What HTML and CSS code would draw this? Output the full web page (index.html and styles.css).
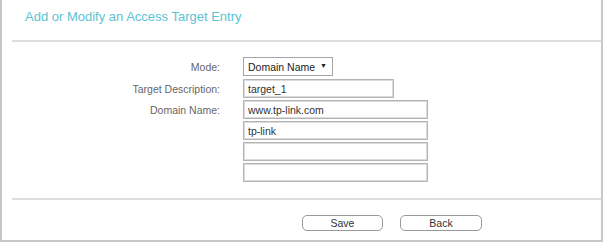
FILE: index.html
```html
<!DOCTYPE html>
<html>
<head>
    <title>Access Target</title>
    <link rel="stylesheet" href="styles.css">
</head>
<body>
<div class="panel">
    <div class="panel-title">Add or Modify an Access Target Entry</div>
    <div class="divider"></div>

    <div class="form">
        <div class="row row-mode">
            <label class="label">Mode:</label>
            <span class="select-wrap">
                <select class="select">
                    <option>Domain Name</option>
                    <option>IP Address</option>
                </select>
            </span>
        </div>
        <div class="row">
            <label class="label">Target Description:</label>
            <input class="text short" type="text" value="target_1">
        </div>
        <div class="row">
            <label class="label">Domain Name:</label>
            <input class="text" type="text" value="www.tp-link.com">
        </div>
        <div class="row">
            <span class="label"></span>
            <input class="text" type="text" value="tp-link">
        </div>
        <div class="row">
            <span class="label"></span>
            <input class="text" type="text" value="">
        </div>
        <div class="row">
            <span class="label"></span>
            <input class="text" type="text" value="">
        </div>
    </div>

    <div class="divider"></div>

    <div class="buttons">
        <button class="btn">Save</button>
        <button class="btn btn-back">Back</button>
    </div>
</div>
</body>
</html>
```

FILE: styles.css
```css
/* page */
body {
    margin: 0;
    background: #fff;
    font-family: "Liberation Sans", Arial, sans-serif;
}

.panel {
    width: 603px;
    height: 242px;
    box-sizing: border-box;
    border: 2px solid #c8c8c8;
    border-top: none;
}

.panel-title {
    height: 40px;
    box-sizing: border-box;
    padding: 9px 0 0 23px;
    font-size: 13px;
    line-height: 15px;
    color: #5cc3d3;
}

.divider {
    margin-left: 10px;
    border-top: 2px solid #dedede;
}

/* form rows */
.form {
    display: flex;
    flex-direction: column;
    gap: 2px;
    padding: 15px 0 16px 0;
}

.row {
    display: flex;
    align-items: center;
    height: 19px;
}

.row-mode {
    margin-bottom: 1px;
}

.label {
    width: 218px;
    margin-right: 23px;
    text-align: right;
    font-size: 10.5px;
    color: #666;
}

.text {
    width: 185px;
    height: 19px;
    box-sizing: border-box;
    margin: 0;
    padding: 0 4px;
    border: 1px solid #b4b4b4;
    box-shadow: inset 0 0 0 1px #dcdcdc;
    font-family: "Liberation Sans", Arial, sans-serif;
    font-size: 10.5px;
    color: #333;
    outline: none;
}

.text.short {
    width: 151px;
}

.select-wrap {
    position: relative;
    display: inline-block;
}

.select-wrap::after {
    content: "\25BC";
    position: absolute;
    right: 6px;
    top: 5px;
    font-size: 7px;
    color: #222;
    pointer-events: none;
}

.select {
    appearance: none;
    -webkit-appearance: none;
    width: 90px;
    height: 19px;
    box-sizing: border-box;
    margin: 0;
    padding: 0 4px;
    border: 1px solid #a5a5a5;
    border-radius: 0;
    background: #fff;
    font-family: "Liberation Sans", Arial, sans-serif;
    font-size: 10.5px;
    color: #222;
    outline: none;
}

/* buttons */
.buttons {
    display: flex;
    gap: 17px;
    padding: 15px 0 0 300px;
}

.btn {
    width: 81px;
    height: 16px;
    padding: 0;
    border: 1px solid #999;
    border-radius: 5px;
    background: #fff;
    font-family: "Liberation Sans", Arial, sans-serif;
    font-size: 10.5px;
    line-height: 14px;
    color: #333;
    cursor: pointer;
}

.btn-back {
    width: 82px;
}
```
